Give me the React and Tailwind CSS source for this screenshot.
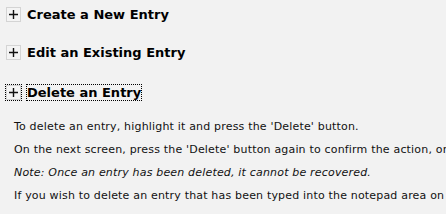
import React from 'react'

const font = { fontFamily: '"DejaVu Sans", Verdana, sans-serif' }

function PlusBox({ focused }) {
  return (
    <span
      className={`flex h-[15px] w-[15px] shrink-0 items-center justify-center border border-[#d4d4d4] bg-[#f4f4f4] ${
        focused ? 'outline outline-1 outline-dotted outline-black' : ''
      }`}
    >
      <svg width="9" height="9" viewBox="0 0 9 9">
        <path d="M4.5 0v9M0 4.5h9" stroke="#111" strokeWidth="1.4" />
      </svg>
    </span>
  )
}

function Heading({ title, focused }) {
  return (
    <div className="flex items-end gap-[6px] pl-[6px]">
      <PlusBox focused={focused} />
      <span
        className={`text-[13px] font-bold leading-[15px] text-black ${
          focused ? 'outline outline-1 outline-dotted outline-black' : ''
        }`}
      >
        {title}
      </span>
    </div>
  )
}

export default function App() {
  return (
    <div className="h-[214px] w-[446px] overflow-hidden bg-[#f2f2f2]" style={font}>
      <div className="pt-[7px]">
        <Heading title="Create a New Entry" />
      </div>
      <div className="pt-[23px]">
        <Heading title="Edit an Existing Entry" />
      </div>
      <div className="pt-[25px]">
        <Heading title="Delete an Entry" focused />
      </div>
      <div className="flex flex-col gap-[9px] whitespace-nowrap pl-[14px] pt-[20px] text-[11px] leading-[14px] tracking-[0.18px] text-[#111]">
        <p>To delete an entry, highlight it and press the 'Delete' button.</p>
        <p>On the next screen, press the 'Delete' button again to confirm the action, or</p>
        <p className="italic">Note: Once an entry has been deleted, it cannot be recovered.</p>
        <p>If you wish to delete an entry that has been typed into the notepad area on</p>
      </div>
    </div>
  )
}
